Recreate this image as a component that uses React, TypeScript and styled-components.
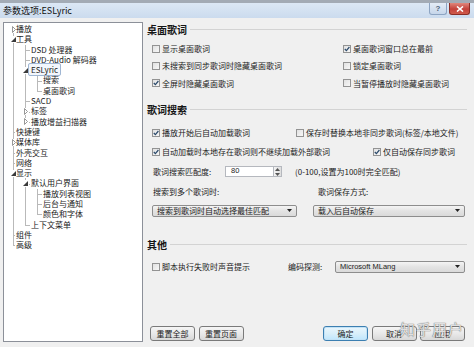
import React from "react";
import styled, {createGlobalStyle, css} from "styled-components";

const FONT = `"Noto Sans CJK SC", "Noto Sans", sans-serif`;
const ROW = 10.3;
const lineX = (level: number) => 8.5 + 12.2 * level;
const textX = [12, 27, 39];

type Node = {
    label: string;
    children?: Node[];
    collapsed?: boolean;
    selected?: boolean;
};

const tree: Node[] = [
    {label: "播放", collapsed: true},
    {
        label: "工具", children: [
            {label: "DSD 处理器"},
            {label: "DVD-Audio 解码器"},
            {label: "ESLyric", selected: true, children: [{label: "搜索"}, {label: "桌面歌词"}]},
            {label: "SACD"},
            {label: "标签", collapsed: true},
            {label: "播放增益扫描器", collapsed: true},
        ]
    },
    {label: "快捷键"},
    {label: "媒体库", collapsed: true},
    {label: "外壳交互"},
    {label: "网络"},
    {
        label: "显示", children: [
            {
                label: "默认用户界面", children: [
                    {label: "播放列表视图"},
                    {label: "后台与通知"},
                    {label: "颜色和字体"},
                ]
            },
            {label: "上下文菜单"},
        ]
    },
    {label: "组件"},
    {label: "高级"},
];

const TreeItem = ({node, level, first, last}: { node: Node, level: number, first: boolean, last: boolean }) => {
    const open = !!node.children && !node.collapsed;
    const hasKids = !!node.children || !!node.collapsed;
    return <Item $level={level} $first={first && level === 0} $last={last}>
        <Row $level={level}>
            {hasKids ? <Expander $level={level}>
                {open
                    ? <svg width="5" height="5" viewBox="0 0 5 5"><path d="M5 0 L5 5 L0 5 Z" fill="#3a3a3a"/></svg>
                    : <svg width="4" height="7" viewBox="0 0 4 7"><path d="M0.5 0.5 L3.5 3.5 L0.5 6.5 Z" fill="#fff" stroke="#8c8c8c" strokeWidth="0.9"/></svg>}
            </Expander> : null}
            <Label $selected={!!node.selected}>{node.label}</Label>
        </Row>
        {open ? <div>
            {node.children!.map((c, i) => <TreeItem
                key={c.label}
                node={c}
                level={level + 1}
                first={i === 0}
                last={i === node.children!.length - 1}
            />)}
        </div> : null}
    </Item>
};

const Check = ({checked, children}: { checked?: boolean, children: React.ReactNode }) => (
    <CheckLabel>
        <Box>
            {checked ? <svg width="6" height="6" viewBox="0 0 6 6">
                <path d="M0.8 3 L2.4 4.7 L5.4 1" fill="none" stroke="#2b4a6b" strokeWidth="1.2"/>
            </svg> : null}
        </Box>
        {children}
    </CheckLabel>
);

const Select = ({width, children}: { width: number, children: React.ReactNode }) => (
    <Combo style={{width}}>
        <span>{children}</span>
        <svg width="5" height="3" viewBox="0 0 5 3"><path d="M0 0 L5 0 L2.5 3 Z" fill="#222"/></svg>
    </Combo>
);

const App = () => {
    return <Window>
        <GlobalStyle/>
        <TitleBar>
            <Title>参数选项:ESLyric</Title>
            <Caption>
                <HelpButton>?</HelpButton>
                <CloseButton>
                    <svg width="8" height="6" viewBox="0 0 8 6">
                        <path d="M1 0.5 L7 5.5 M7 0.5 L1 5.5" stroke="#fff" strokeWidth="1.6"/>
                    </svg>
                </CloseButton>
            </Caption>
        </TitleBar>
        <Body>
            <Tree>
                {tree.map((n, i) => <TreeItem
                    key={n.label}
                    node={n}
                    level={0}
                    first={i === 0}
                    last={i === tree.length - 1}
                />)}
            </Tree>
            <Options>
                <Header>桌面歌词</Header>
                <Line $h={17.3} $top={4}>
                    <Cell $w={191}><Check>显示桌面歌词</Check></Cell>
                    <Check checked>桌面歌词窗口总在最前</Check>
                </Line>
                <Line $h={17.3}>
                    <Cell $w={191}><Check>未搜索到同步歌词时隐藏桌面歌词</Check></Cell>
                    <Check>锁定桌面歌词</Check>
                </Line>
                <Line $h={17.3}>
                    <Cell $w={191}><Check checked>全屏时隐藏桌面歌词</Check></Cell>
                    <Check>当暂停播放时隐藏桌面歌词</Check>
                </Line>

                <Header $top={11}>歌词搜索</Header>
                <Line $h={18} $top={7}>
                    <Cell $w={144}><Check checked>播放开始后自动加载歌词</Check></Cell>
                    <Check>保存时替换本地非同步歌词(标签/本地文件)</Check>
                </Line>
                <Line $h={20}>
                    <Cell $w={221}><Check checked>自动加载时本地存在歌词则不继续加载外部歌词</Check></Cell>
                    <Check checked>仅自动保存同步歌词</Check>
                </Line>
                <Line $h={20} $indent={6}>
                    <Cell $w={72}>歌词搜索匹配度:</Cell>
                    <Spin>
                        <NumberBox>80</NumberBox>
                        <Spinner>
                            <svg width="5" height="3" viewBox="0 0 5 3"><path d="M0 3 L5 3 L2.5 0 Z" fill="#555"/></svg>
                            <svg width="5" height="3" viewBox="0 0 5 3"><path d="M0 0 L5 0 L2.5 3 Z" fill="#555"/></svg>
                        </Spinner>
                    </Spin>
                    <Hint>(0-100,设置为100时完全匹配)</Hint>
                </Line>
                <Line $h={20} $indent={6}>
                    <Cell $w={165}>搜索到多个歌词时:</Cell>
                    歌词保存方式:
                </Line>
                <Line $h={18}>
                    <Select width={145}>搜索到歌词时自动选择最佳匹配</Select>
                    <Gap $w={16}/>
                    <Select width={152}>载入后自动保存</Select>
                </Line>

                <Header $top={18}>其他</Header>
                <Line $h={16} $top={7}>
                    <Cell $w={136}><Check>脚本执行失败时声音提示</Check></Cell>
                    <Cell $w={47}>编码探测:</Cell>
                    <Select width={130}><Latin>Microsoft MLang</Latin></Select>
                </Line>

                <Buttons>
                    <ButtonGroup>
                        <Button>重置全部</Button>
                        <Button>重置页面</Button>
                    </ButtonGroup>
                    <ButtonGroup>
                        <Button $primary>确定</Button>
                        <Button>取消</Button>
                        <Button>应用</Button>
                    </ButtonGroup>
                </Buttons>
            </Options>
        </Body>
        <Watermark>知乎用户</Watermark>
    </Window>
};

export default App;

const GlobalStyle = createGlobalStyle`
    html, body {
        margin: 0;
        padding: 0;
        background: #f0f0f0;
    }

    body {
        font-family: ${FONT};
    }
`;

const Window = styled.div`
    position: relative;
    width: 474px;
    height: 347px;
    display: flex;
    flex-direction: column;
    overflow: hidden;
    background: #f0f0f0;
    color: #1b1b1b;
    font-size: 8px;
`;

const TitleBar = styled.div`
    height: 15px;
    border-top: 3px solid #a3abb5;
    display: flex;
    align-items: center;
    justify-content: space-between;
    padding: 0 4px 0 3px;
    background: linear-gradient(#dce8f5, #cbdbee);
`;

const Title = styled.div`
    font-size: 9px;
    color: #111;
    padding-bottom: 1px;
`;

const Caption = styled.div`
    display: flex;
    gap: 2px;
    align-self: flex-start;
`;

const captionButton = css`
    height: 12px;
    box-sizing: border-box;
    border-radius: 0 0 3px 3px;
    display: flex;
    align-items: center;
    justify-content: center;
`;

const HelpButton = styled.div`
    ${captionButton};
    width: 18px;
    border: 1px solid #8da4c2;
    border-top: none;
    background: linear-gradient(#e4ecf6, #c6d6ea);
    color: #4b5e78;
    font-family: "Liberation Sans", sans-serif;
    font-size: 8px;
    font-weight: bold;
`;

const CloseButton = styled.div`
    ${captionButton};
    width: 21px;
    border: 1px solid #8b2d25;
    border-top: none;
    background: linear-gradient(#e0877c, #c4413a 55%, #cf5b4c);
`;

const Body = styled.div`
    flex: 1;
    display: flex;
    gap: 4px;
    padding: 4px 7px 5px 3px;
    min-height: 0;
`;

const Tree = styled.div`
    width: 140px;
    flex-shrink: 0;
    box-sizing: border-box;
    border: 1px solid #8c9099;
    background: #fff;
    padding-top: 1px;
    font-size: 8px;
    color: #222;
`;

const Item = styled.div<{ $level: number, $first: boolean, $last: boolean }>`
    position: relative;

    &::before {
        content: "";
        position: absolute;
        left: ${p => lineX(p.$level)}px;
        top: ${p => p.$first ? ROW / 2 : 0}px;
        ${p => p.$last ? `height: ${ROW / 2}px;` : `bottom: 0;`}
        border-left: 1px solid #b9b9b9;
    }
`;

const Row = styled.div<{ $level: number }>`
    position: relative;
    height: ${ROW}px;
    line-height: ${ROW}px;
    padding-left: ${p => textX[p.$level]}px;
    white-space: nowrap;

    &::after {
        content: "";
        position: absolute;
        left: ${p => lineX(p.$level)}px;
        top: ${ROW / 2}px;
        width: ${p => textX[p.$level] - lineX(p.$level) - 1}px;
        border-top: 1px solid #b9b9b9;
    }
`;

const Expander = styled.span<{ $level: number }>`
    position: absolute;
    z-index: 1;
    left: ${p => lineX(p.$level) - 2.5}px;
    top: 1.5px;
    width: 7px;
    height: 7px;
    display: flex;
    align-items: center;
    justify-content: center;
    background: #fff;
`;

const Label = styled.span<{ $selected: boolean }>`
    position: relative;
    z-index: 1;
    ${p => p.$selected && css`
        margin-left: -3px;
        padding: 0 2px;
        border: 1px solid #9fb6d3;
        border-radius: 2px;
        background: #f3f7fc;
    `}
`;

const Options = styled.div`
    flex: 1;
    display: flex;
    flex-direction: column;
    min-width: 0;
`;

const Header = styled.div<{ $top?: number }>`
    height: 14px;
    margin-top: ${p => p.$top ?? 0}px;
    display: flex;
    align-items: center;
    gap: 3px;
    font-size: 10px;
    font-weight: bold;
    color: #151515;

    &::after {
        content: "";
        flex: 1;
        border-top: 1px solid #d3d3d3;
    }
`;

const Line = styled.div<{ $h: number, $top?: number, $indent?: number }>`
    height: ${p => p.$h}px;
    margin-top: ${p => p.$top ?? 0}px;
    padding-left: ${p => p.$indent ?? 5}px;
    display: flex;
    align-items: center;
    white-space: nowrap;
`;

const Cell = styled.div<{ $w: number }>`
    width: ${p => p.$w}px;
    flex-shrink: 0;
`;

const Gap = styled.div<{ $w: number }>`
    width: ${p => p.$w}px;
    flex-shrink: 0;
`;

const CheckLabel = styled.div`
    display: flex;
    align-items: center;
    gap: 2px;
`;

const Box = styled.span`
    width: 8px;
    height: 8px;
    box-sizing: border-box;
    border: 1px solid #939393;
    background: linear-gradient(135deg, #e1e1e1, #f7f7f7);
    display: flex;
    align-items: center;
    justify-content: center;
`;

const Spin = styled.div`
    display: flex;
    height: 11px;
`;

const NumberBox = styled.div`
    width: 48px;
    box-sizing: border-box;
    border: 1px solid #b5b8be;
    border-right: none;
    background: #fff;
    padding-left: 5px;
    font-family: "Liberation Sans", sans-serif;
    font-size: 7.5px;
    line-height: 8px;
`;

const Spinner = styled.div`
    width: 9px;
    box-sizing: border-box;
    border: 1px solid #b5b8be;
    background: linear-gradient(90deg, #f3f3f3, #dedede);
    display: flex;
    flex-direction: column;
    align-items: center;
    justify-content: space-around;
`;

const Hint = styled.span`
    margin-left: 13px;
`;

const Combo = styled.div`
    height: 12px;
    box-sizing: border-box;
    flex-shrink: 0;
    border: 1px solid #8d8d8d;
    border-radius: 2px;
    background: linear-gradient(#f4f4f4, #e3e3e3 50%, #dadada);
    display: flex;
    align-items: center;
    justify-content: space-between;
    padding: 0 4px 0 4px;
    font-size: 8px;
    line-height: 10px;
`;

const Latin = styled.span`
    font-family: "Liberation Sans", sans-serif;
    font-size: 7.5px;
`;

const Buttons = styled.div`
    margin-top: auto;
    margin-bottom: 1px;
    display: flex;
    justify-content: space-between;
    padding: 0 2px 0 3px;
`;

const ButtonGroup = styled.div`
    display: flex;
    gap: 3.5px;
`;

const Button = styled.div<{ $primary?: boolean }>`
    width: 45px;
    height: 15px;
    box-sizing: border-box;
    border: 1px solid #7a7a7a;
    border-radius: 3px;
    background: linear-gradient(#f5f5f5, #e9e9e9 50%, #d8d8d8);
    display: flex;
    align-items: center;
    justify-content: center;
    font-size: 8px;
    ${p => p.$primary && css`
        border-color: #3c7fb1;
        background: linear-gradient(#eaf6fd, #d9effa 50%, #bee6fd);
        box-shadow: inset 0 0 0 1px #c2e2f6;
    `}
`;

const Watermark = styled.div`
    position: absolute;
    right: 10px;
    bottom: 8px;
    font-size: 15px;
    letter-spacing: 1px;
    color: rgba(255, 255, 255, 0.8);
    text-shadow: 0 0 1px #6f6f6f, 0 0 1px #6f6f6f;
    pointer-events: none;
`;
